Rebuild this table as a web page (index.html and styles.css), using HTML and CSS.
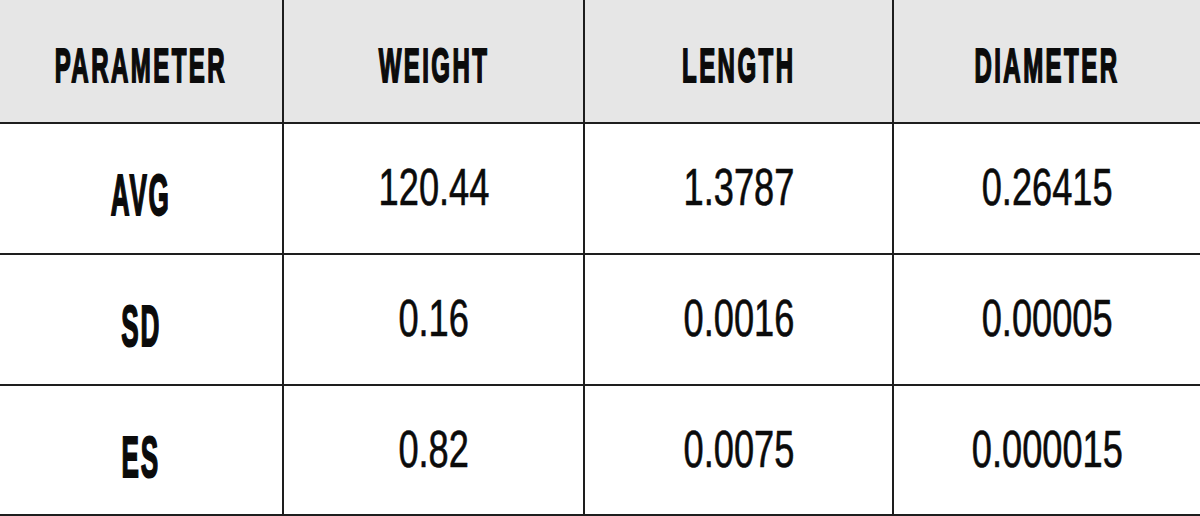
FILE: index.html
```html
<!DOCTYPE html>
<html>
<head>
<meta charset="utf-8">
<link rel="stylesheet" href="styles.css">
</head>
<body>
<div class="grid">
  <div class="cell head"><span class="h">PARAMETER</span></div>
  <div class="cell head"><span class="h">WEIGHT</span></div>
  <div class="cell head"><span class="h">LENGTH</span></div>
  <div class="cell head last"><span class="h">DIAMETER</span></div>

  <div class="cell"><span class="lab">AVG</span></div>
  <div class="cell"><span class="val">120.44</span></div>
  <div class="cell"><span class="val">1.3787</span></div>
  <div class="cell last"><span class="val">0.26415</span></div>

  <div class="cell"><span class="lab">SD</span></div>
  <div class="cell"><span class="val">0.16</span></div>
  <div class="cell"><span class="val">0.0016</span></div>
  <div class="cell last"><span class="val">0.00005</span></div>

  <div class="cell"><span class="lab">ES</span></div>
  <div class="cell"><span class="val">0.82</span></div>
  <div class="cell"><span class="val">0.0075</span></div>
  <div class="cell last"><span class="val">0.000015</span></div>
</div>
</body>
</html>
```
FILE: styles.css
```css
html, body {
  margin: 0;
  padding: 0;
  background: #ffffff;
}
body {
  width: 1200px;
  height: 516px;
  overflow: hidden;
  font-family: "Liberation Sans", Arial, sans-serif;
  color: #0b0b0b;
}
.grid {
  display: grid;
  grid-template-columns: 284px 301px 309px 306px;
  grid-template-rows: 124px 131px 131px 130px;
}
.cell {
  display: flex;
  align-items: center;
  justify-content: center;
  border-right: 2px solid #1e1e1e;
  border-bottom: 2px solid #1e1e1e;
  overflow: visible;
  white-space: nowrap;
}
.cell.last {
  border-right: none;
}
.cell.head {
  background: #e6e6e6;
}
.h {
  display: inline-block;
  font-weight: 700;
  font-size: 49px;
  letter-spacing: 5px;
  -webkit-text-stroke: 2px #0b0b0b;
  transform: translateY(4px) scaleX(0.49);
}
.lab {
  display: inline-block;
  font-weight: 700;
  font-size: 58px;
  letter-spacing: 4px;
  -webkit-text-stroke: 2px #0b0b0b;
  transform: translateY(6px) scaleX(0.45);
}
.val {
  display: inline-block;
  font-weight: 400;
  font-size: 51px;
  -webkit-text-stroke: 0.6px #0b0b0b;
  transform: translateY(-1px) scaleX(0.71);
}
```
